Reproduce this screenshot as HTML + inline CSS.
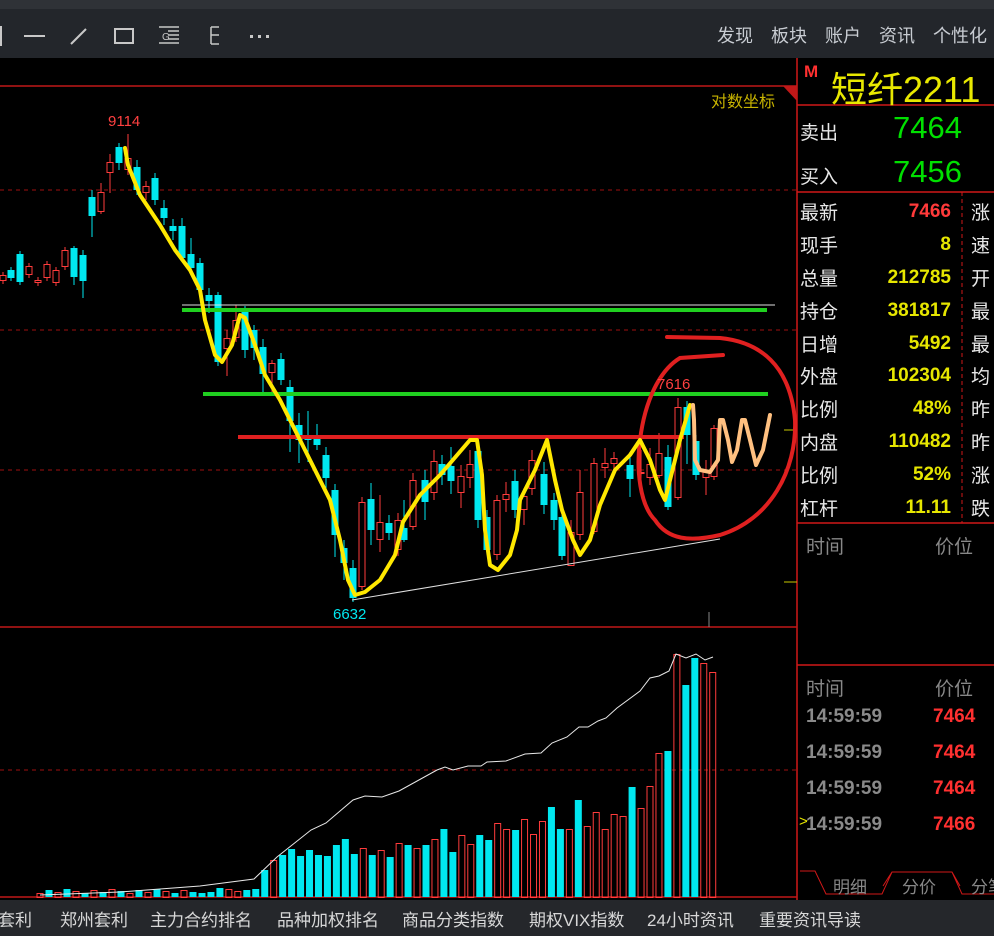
<!DOCTYPE html><html><head><meta charset="utf-8"><style>
body{margin:0;width:994px;height:936px;overflow:hidden;background:#000;font-family:"Liberation Sans","Noto Sans CJK SC",sans-serif;position:relative}
.a{position:absolute;white-space:nowrap}
.lbl{color:#e8e8e8;font-size:19px}
.val{color:#e6e600;font-size:19px;font-weight:bold;text-align:right;width:120px;margin-top:3px}
.tm{color:#8a8a8a;font-size:19px;font-weight:bold}
.pr{color:#ff3030;font-size:19px;font-weight:bold}
.mn{color:#c8ccd2;font-size:18px;top:22px}
</style></head><body>
<div class="a" style="left:0;top:0;width:994px;height:9px;background:#2f3237"></div>
<div class="a" style="left:0;top:9px;width:994px;height:49px;background:#23262b"></div>
<svg class="a" style="left:0;top:0" width="300" height="60">
<g stroke="#c8c8c8" stroke-width="2" fill="none">
<line x1="1" y1="26" x2="1" y2="46"/>
<line x1="24" y1="36" x2="45" y2="36"/>
<line x1="71" y1="44" x2="86" y2="29"/>
<rect x="115" y="29" width="18" height="14"/>
<path d="M159 27h20M168 31h11M168 35h11M168 39h11M159 43h20" stroke-width="1.5"/>
<path d="M211 27v17M211 27h8M211 35h8M211 44h8" stroke-width="1.5"/>
</g>
<text x="162" y="40" fill="#c8c8c8" font-size="10" font-family="Liberation Sans">G</text>
<g fill="#c8c8c8"><rect x="250" y="35" width="3" height="3"/><rect x="258" y="35" width="3" height="3"/><rect x="266" y="35" width="3" height="3"/></g>
</svg>
<div class="a mn" style="left:717px">发现</div><div class="a mn" style="left:771px">板块</div><div class="a mn" style="left:825px">账户</div><div class="a mn" style="left:879px">资讯</div><div class="a mn" style="left:933px">个性化</div>

<svg class="a" style="left:0;top:58px" width="994" height="842" id="s"></svg>

<div class="a" style="left:711px;top:88px;color:#c8b400;font-size:16px">对数坐标</div>
<div class="a" style="left:108px;top:113px;color:#ff4040;font-size:15px">9114</div>
<div class="a" style="left:333px;top:606px;color:#00e8f0;font-size:15px">6632</div>
<div class="a" style="left:657px;top:376px;color:#ff4040;font-size:15px">7616</div>

<div class="a" style="left:804px;top:62px;color:#ff3030;font-size:17px;font-weight:bold">M</div>
<div class="a" style="left:831px;top:61px;color:#e8e800;font-size:36px">短纤2211</div>
<div class="a" style="left:800px;top:118px;color:#e8e8e8;font-size:19px">卖出</div>
<div class="a" style="left:893px;top:110px;color:#00e000;font-size:31px">7464</div>
<div class="a" style="left:800px;top:162px;color:#e8e8e8;font-size:19px">买入</div>
<div class="a" style="left:893px;top:154px;color:#00e000;font-size:31px">7456</div>

<div class="a lbl" style="left:800px;top:198px">最新</div><div class="a val" style="left:831px;top:198px;color:#ff3a3a">7466</div><div class="a lbl" style="left:971px;top:198px">涨</div>
<div class="a lbl" style="left:800px;top:231px">现手</div><div class="a val" style="left:831px;top:231px">8</div><div class="a lbl" style="left:971px;top:231px">速</div>
<div class="a lbl" style="left:800px;top:264px">总量</div><div class="a val" style="left:831px;top:264px">212785</div><div class="a lbl" style="left:971px;top:264px">开</div>
<div class="a lbl" style="left:800px;top:297px">持仓</div><div class="a val" style="left:831px;top:297px">381817</div><div class="a lbl" style="left:971px;top:297px">最</div>
<div class="a lbl" style="left:800px;top:330px">日增</div><div class="a val" style="left:831px;top:330px">5492</div><div class="a lbl" style="left:971px;top:330px">最</div>
<div class="a lbl" style="left:800px;top:362px">外盘</div><div class="a val" style="left:831px;top:362px">102304</div><div class="a lbl" style="left:971px;top:362px">均</div>
<div class="a lbl" style="left:800px;top:395px">比例</div><div class="a val" style="left:831px;top:395px">48%</div><div class="a lbl" style="left:971px;top:395px">昨</div>
<div class="a lbl" style="left:800px;top:428px">内盘</div><div class="a val" style="left:831px;top:428px">110482</div><div class="a lbl" style="left:971px;top:428px">昨</div>
<div class="a lbl" style="left:800px;top:461px">比例</div><div class="a val" style="left:831px;top:461px">52%</div><div class="a lbl" style="left:971px;top:461px">涨</div>
<div class="a lbl" style="left:800px;top:494px">杠杆</div><div class="a val" style="left:831px;top:494px">11.11</div><div class="a lbl" style="left:971px;top:494px">跌</div>

<div class="a" style="left:806px;top:532px;color:#888;font-size:19px">时间</div>
<div class="a" style="left:935px;top:532px;color:#888;font-size:19px">价位</div>
<div class="a" style="left:806px;top:674px;color:#888;font-size:19px">时间</div>
<div class="a" style="left:935px;top:674px;color:#888;font-size:19px">价位</div>
<div class="a tm" style="left:806px;top:706px">14:59:59</div><div class="a pr" style="left:933px;top:706px">7464</div>
<div class="a tm" style="left:806px;top:742px">14:59:59</div><div class="a pr" style="left:933px;top:742px">7464</div>
<div class="a tm" style="left:806px;top:778px">14:59:59</div><div class="a pr" style="left:933px;top:778px">7464</div>
<div class="a tm" style="left:806px;top:814px">14:59:59</div><div class="a pr" style="left:933px;top:814px">7466</div>
<div class="a" style="left:799px;top:813px;color:#e8e800;font-size:15px">&gt;</div>
<div class="a" style="left:833px;top:873px;color:#888;font-size:17px">明细</div>
<div class="a" style="left:902px;top:873px;color:#888;font-size:17px">分价</div>
<div class="a" style="left:971px;top:873px;color:#888;font-size:17px">分笔</div>

<div class="a" style="left:0;top:900px;width:994px;height:36px;background:#25272b"></div>
<div class="a" style="top:906px;left:0;color:#d8d8d8;font-size:17px;width:994px;height:26px;overflow:hidden">
<span class="a" style="left:-36px">跨期套利</span><span class="a" style="left:60px">郑州套利</span><span class="a" style="left:150px">主力合约排名</span><span class="a" style="left:277px">品种加权排名</span><span class="a" style="left:402px">商品分类指数</span><span class="a" style="left:529px">期权VIX指数</span><span class="a" style="left:647px">24小时资讯</span><span class="a" style="left:759px">重要资讯导读</span></div>

<script>
var o=58,h='';
function L(x1,y1,x2,y2,c,w,d){h+='<line x1="'+x1+'" y1="'+(y1-o)+'" x2="'+x2+'" y2="'+(y2-o)+'" stroke="'+c+'" stroke-width="'+(w||1)+'"'+(d?' stroke-dasharray="'+d+'"':'')+'/>';}
L(0,86,797,86,'#c01818',1.5);L(797,58,797,900,'#d01818',1.5);
L(0,627,797,627,'#c01818',1.5);L(0,897,797,897,'#c01818',1.5);
[190,330,470].forEach(function(y){L(0,y,797,y,'#a01010',1,'4 4')});
L(0,770,797,770,'#a01010',1,'4 4');
L(797,105,994,105,'#d01818',1.5);L(797,192,994,192,'#d01818',1.5);L(797,523,994,523,'#d01818',1.5);L(797,665,994,665,'#d01818',1.5);
L(962,192,962,523,'#d01818',1,'4 3');
h+='<polygon points="783,'+(86-o)+' 797,'+(86-o)+' 797,'+(101-o)+'" fill="#c01818"/>';
[430,582].forEach(function(y){L(784,y,797,y,'#c8c800',1)});
h+='<path d="M800 '+(871-o)+'H815L826 '+(894-o)+'H882L892 '+(872-o)+'H952L962 '+(894-o)+'H994M892 '+(872-o)+'L883 '+(886-o)+'M952 '+(872-o)+'L960 '+(886-o)+'" stroke="#d01818" fill="none"/>';
var C=[[3,275,281],[11,270,278,1],[20,254,282,1],[29,266,275],[38,280,283],[47,264,278],[56,270,283],[65,250,267],[74,248,277,1,246,285],[83,255,281,1,250,298],[92,197,216,1,190,237],[101,192,212,0,183,214],[110,162,173,0,154,193],[119,147,163,1,143,170],[128,158,170,0,134,175],[137,167,190,1,160,195],[146,186,193,0,181,200],[155,178,200,1,173,205],[164,208,218,1,200,225],[173,226,231,1,219,240],[182,226,258,1,218,260],[191,254,268,1,238,272],[200,263,290,1,258,293],[209,295,301,1,288,313],[218,295,362,1,292,366],[227,338,349,0,330,376],[236,320,338,0,305,342],[245,310,350,1,306,358],[254,330,348,1,325,360],[263,347,374,1,339,392],[272,363,373,0,360,395],[281,359,380,1,353,385],[290,387,421,1,380,452],[299,425,440,1,413,463],[308,435,440,1,411,462],[317,438,445,1,424,450],[326,455,478,1,447,490],[335,490,535,1,484,557],[344,548,563,1,540,580],[353,568,598,1,560,602],[362,502,587,0,497,590],[371,499,530,1,483,545],[380,522,540,0,495,552],[389,523,533,1,515,540],[398,520,550,0,513,556],[404,528,540,1,500,542],[413,480,527,0,473,530],[425,480,502,1,470,520],[434,461,493,0,450,500],[442,464,475,1,455,485],[451,466,481,1,447,494],[461,476,493,0,465,508],[470,464,478,0,450,488],[478,451,520,1,445,528],[487,517,550,1,510,555],[497,500,555,0,495,560],[506,494,500,0,482,512],[515,481,510,1,470,518],[524,496,510,0,488,525],[532,460,489,0,450,495],[544,474,505,1,462,514],[554,500,520,1,493,530],[562,517,556,1,507,560],[571,532,566,0,520,565],[580,492,535,0,470,540],[594,463,532,0,458,534],[605,463,468,0,448,478],[614,458,464,0,452,472],[630,465,479,1,452,497],[641,472,474,0,450,480],[650,464,478,0,448,485],[659,453,476,0,433,478],[668,457,507,1,445,510],[678,407,498,0,398,500],[687,407,435,1,401,464],[696,441,475,1,435,480],[706,470,478,0,460,495],[714,428,477,0,425,480]];
C.forEach(function(c){var x=c[0],t=c[1],b=c[2],cy=c[3],wt=c[4]||t-3,wb=c[5]||b+3,col=cy?'#00e8f0':'#ff3c3c';
L(x,wt,x,wb,col,1);
if(cy)h+='<rect x="'+(x-3.5)+'" y="'+(t-o)+'" width="7" height="'+Math.max(b-t,1)+'" fill="'+col+'"/>';
else h+='<rect x="'+(x-3)+'" y="'+(t-o+.5)+'" width="6" height="'+Math.max(b-t-1,1)+'" fill="#000" stroke="'+col+'"/>';});
var V=[893,892,888,889,891,890,889,870,860,855,849,856,850,855,856,845,839,854,848,855,850,857,843,845,848,845,839,829,852,835,844,835,840,823,829,830,819,834,821,807,829,829,800,826,812,829,814,816,787,808,786,753,751,654,685,658,663,672];
var VC=[1,1,1,0,0,1,1,1,0,1,1,1,1,1,1,1,1,1,0,1,0,1,0,1,0,1,0,1,1,0,0,1,1,0,0,1,0,0,0,1,1,0,1,0,0,0,0,0,1,0,0,0,1,0,1,1,0,0];
function bar(x,t,cy){var col=cy?'#00e8f0':'#ff3c3c';if(cy)h+='<rect x="'+(x-3.5)+'" y="'+(t-o)+'" width="7" height="'+(897-t)+'" fill="'+col+'"/>';else h+='<rect x="'+(x-3)+'" y="'+(t-o+.5)+'" width="6" height="'+(897-t)+'" fill="none" stroke="'+col+'"/>';}
for(var i=0;i<V.length;i++)bar(202+i*8.96,V[i],VC[i]);
for(var x=40;x<200;x+=9)bar(x,893-((x*7)%5),(x/9|0)%2);
h+='<polyline fill="none" stroke="#e8e8e8" stroke-width="1" points="'+[[40,895],[120,892],[200,886],[254,879],[277,857],[311,830],[326,823],[353,800],[365,796],[382,797],[399,791],[437,770],[445,767],[453,770],[468,766],[481,766],[487,762],[506,761],[525,754],[541,753],[552,743],[567,737],[579,727],[588,727],[598,721],[606,718],[617,708],[640,691],[650,678],[659,676],[669,671],[676,654],[686,658],[696,654],[705,660],[713,657]].map(function(p){return p[0]+','+(p[1]-o)}).join(' ')+'"/>';
L(709,612,709,627,'#888',1);
L(182,305,775,305,'#e0e0e0',1);
L(182,310,767,310,'#20d020',4);L(203,394,768,394,'#20d020',4);L(238,437,684,437,'#e02020',4);
L(352,600,720,539,'#e0e0e0',1);
function P(pts){return pts.map(function(p,i){return (i?'L':'M')+p[0]+' '+(p[1]-o)}).join('');}
h+='<path d="M667 '+(337-o)+' L720 '+(338-o)+' C760 '+(342-o)+' 790 '+(365-o)+' 795 '+(420-o)+' C797 '+(470-o)+' 770 '+(520-o)+' 720 '+(535-o)+' C690 '+(542-o)+' 668 '+(540-o)+' 655 '+(520-o)+' C640 '+(505-o)+' 636 '+(470-o)+' 640 '+(440-o)+' C645 '+(400-o)+' 660 '+(370-o)+' 680 '+(358-o)+' L723 '+(355-o)+'" fill="none" stroke="#e02020" stroke-width="4" stroke-linecap="round"/>';
var Y=[[125,148],[128,165],[140,195],[160,225],[175,250],[190,270],[200,290],[205,320],[215,355],[222,362],[232,345],[240,315],[245,318],[255,345],[265,375],[280,400],[290,420],[300,440],[315,470],[330,500],[340,540],[348,580],[355,595],[365,592],[380,580],[395,555],[403,522],[420,495],[440,475],[470,440],[477,440],[482,475],[485,530],[490,565],[498,570],[510,555],[517,530],[520,500],[535,470],[547,440],[555,480],[562,510],[573,540],[580,555],[590,540],[600,505],[615,470],[630,455],[640,440],[650,460],[660,490],[665,500],[670,480],[680,440],[690,405]];
h+='<path d="'+P(Y)+'" fill="none" stroke="#ffe800" stroke-width="4" stroke-linejoin="round" stroke-linecap="round"/>';
var W=[[693,405],[694,420],[695,460],[700,470],[710,472],[718,460],[720,420],[723,420],[728,440],[732,462],[737,450],[742,420],[745,420],[750,440],[756,465],[763,450],[770,415]];
h+='<path d="'+P(W)+'" fill="none" stroke="#ffc080" stroke-width="4" stroke-linejoin="round" stroke-linecap="round"/>';
document.getElementById('s').innerHTML=h;
</script>
</body></html>
